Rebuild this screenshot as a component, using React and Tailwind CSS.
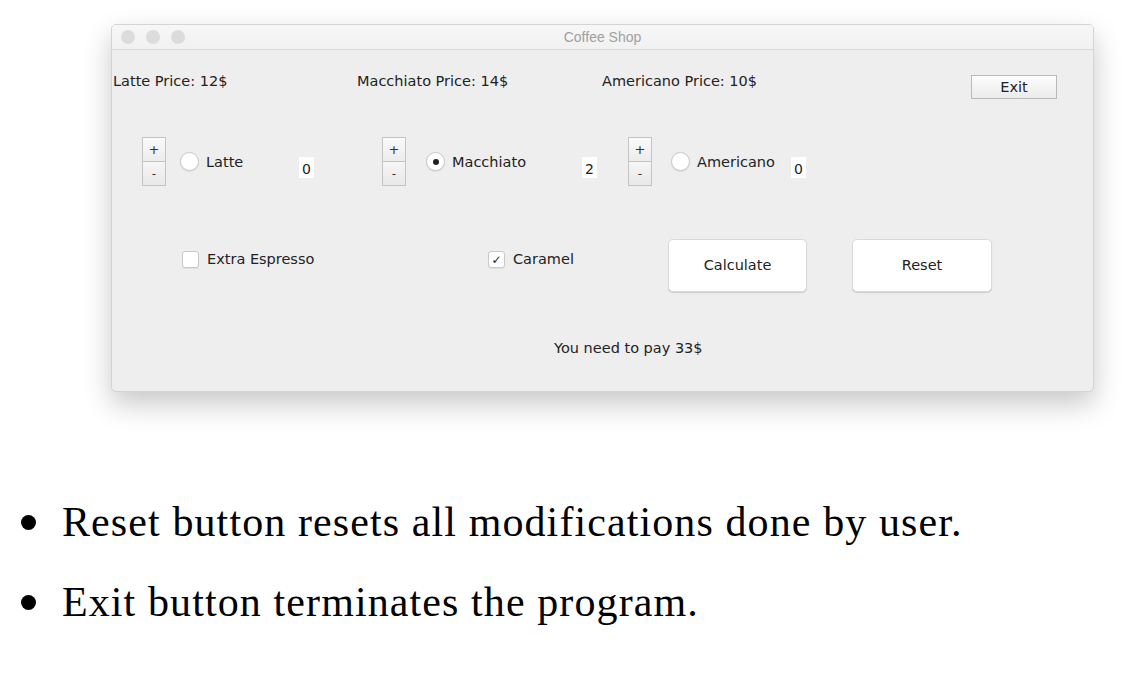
const ui = { fontFamily: '"DejaVu Sans", "Noto Sans", sans-serif' };

function Spinner() {
  return (
    <div className="flex flex-col w-[24px] shrink-0">
      <div className="h-[25px] border border-[#c4c4c4] bg-gradient-to-b from-[#fafafa] to-[#ececec] flex items-center justify-center text-[13px] leading-none text-[#333]">
        +
      </div>
      <div className="h-[24px] border border-t-0 border-[#c4c4c4] bg-gradient-to-b from-[#f6f6f6] to-[#e8e8e8] flex items-center justify-center text-[12px] leading-none text-[#333]">
        -
      </div>
    </div>
  );
}

function Radio({ checked }) {
  return (
    <div className="mt-[15px] w-[19px] h-[19px] rounded-full bg-white border border-[#c9c9c9] shadow-[0_1px_1px_rgba(0,0,0,0.08)] flex items-center justify-center shrink-0">
      {checked && <div className="w-[6px] h-[6px] rounded-full bg-[#222]" />}
    </div>
  );
}

function Coffee({ name, qty, checked, gap, labelWidth }) {
  return (
    <div className="flex items-start">
      <Spinner />
      <div className={gap}>
        <Radio checked={checked} />
      </div>
      <span className={`ml-[7px] mt-[16px] text-[14.5px] leading-[18px] text-[#222] ${labelWidth}`}>
        {name}
      </span>
      <div className="mt-[20px] w-[15px] h-[21px] bg-white flex items-end justify-center pb-[2px] text-[14px] leading-none text-[#222]">
        {qty}
      </div>
    </div>
  );
}

function Check({ label, checked }) {
  return (
    <div className="flex items-start">
      <div className="mt-[12px] w-[17px] h-[17px] rounded-[3px] bg-white border border-[#c9c9c9] shadow-[0_1px_1px_rgba(0,0,0,0.06)] flex items-center justify-center text-[12px] leading-none text-[#222]">
        {checked ? '✓' : ''}
      </div>
      <span className="ml-[8px] mt-[11px] text-[14.5px] leading-[18px] text-[#222]">{label}</span>
    </div>
  );
}

export default function App() {
  return (
    <div className="w-[1125px] h-[676px] bg-white overflow-hidden">
      <div className="pt-[24px] pl-[111px]">
        <div
          className="w-[983px] h-[368px] rounded-[5px] bg-[#eeeeee] border border-[#d4d4d4] shadow-[0_12px_28px_rgba(0,0,0,0.22)] overflow-hidden"
          style={ui}
        >
          {/* title bar */}
          <div className="h-[25px] relative bg-gradient-to-b from-[#f7f7f7] to-[#f1f1f1] border-b border-[#d8d8d8] flex items-center">
            <div className="flex gap-[11px] pl-[9px]">
              <div className="w-[14px] h-[14px] rounded-full bg-[#dcdcdc]" />
              <div className="w-[14px] h-[14px] rounded-full bg-[#dcdcdc]" />
              <div className="w-[14px] h-[14px] rounded-full bg-[#dcdcdc]" />
            </div>
            <div
              className="absolute inset-0 flex items-center justify-center text-[14px] text-[#a0a0a0]"
              style={{ fontFamily: '"Liberation Sans", Arial, sans-serif' }}
            >
              Coffee Shop
            </div>
          </div>

          {/* prices */}
          <div className="flex items-start pt-[22px] pl-[1px] text-[14.5px] leading-[18px] text-[#222]">
            <span className="w-[244px]">Latte Price: 12$</span>
            <span className="w-[245px]">Macchiato Price: 14$</span>
            <span className="w-[369px]">Americano Price: 10$</span>
            <button className="mt-[3px] w-[86px] h-[24px] border border-[#b9b9b9] bg-gradient-to-b from-[#fdfdfd] to-[#ebebeb] text-[14.5px] text-[#222]">
              Exit
            </button>
          </div>

          {/* coffee rows */}
          <div className="flex items-start mt-[38px] pl-[30px]">
            <div className="w-[240px]">
              <Coffee name="Latte" qty="0" gap="ml-[14px]" labelWidth="w-[93px]" />
            </div>
            <div className="w-[246px]">
              <Coffee name="Macchiato" qty="2" checked gap="ml-[20px]" labelWidth="w-[130px]" />
            </div>
            <Coffee name="Americano" qty="0" gap="ml-[19px]" labelWidth="w-[94px]" />
          </div>

          {/* options + actions */}
          <div className="flex items-start mt-[53px] pl-[70px]">
            <div className="w-[306px]">
              <Check label="Extra Espresso" />
            </div>
            <div className="w-[180px]">
              <Check label="Caramel" checked />
            </div>
            <button className="w-[139px] h-[53px] rounded-[5px] bg-white border border-[#dadada] shadow-[0_1px_1px_rgba(0,0,0,0.15)] text-[14.5px] text-[#222]">
              Calculate
            </button>
            <button className="ml-[45px] w-[140px] h-[53px] rounded-[5px] bg-white border border-[#dadada] shadow-[0_1px_1px_rgba(0,0,0,0.15)] text-[14.5px] text-[#222]">
              Reset
            </button>
          </div>

          <div className="mt-[47px] pl-[442px] text-[14.5px] leading-[18px] text-[#222]">You need to pay 33$</div>
        </div>
      </div>

      {/* notes */}
      <ul
        className="mt-[90px] pl-[21px] text-[42px] leading-[80px] tracking-[1.1px] text-black"
        style={{ fontFamily: '"Liberation Serif", "Times New Roman", serif' }}
      >
        <li className="flex items-center">
          <span className="w-[15px] h-[15px] rounded-full bg-black mr-[26px] shrink-0" />
          Reset button resets all modifications done by user.
        </li>
        <li className="flex items-center">
          <span className="w-[15px] h-[15px] rounded-full bg-black mr-[26px] shrink-0" />
          Exit button terminates the program.
        </li>
      </ul>
    </div>
  );
}
